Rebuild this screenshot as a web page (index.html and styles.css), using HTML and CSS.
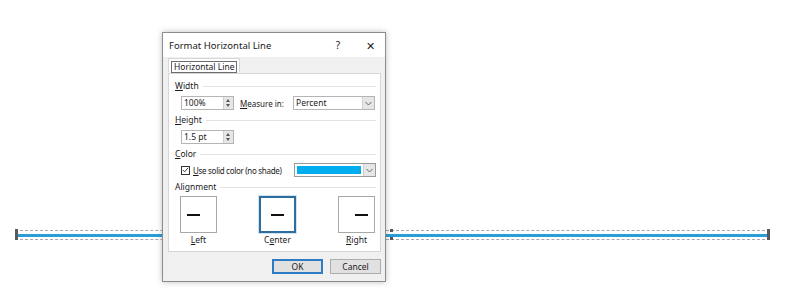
FILE: index.html
```html
<!DOCTYPE html>
<html lang="en">
<head>
<meta charset="UTF-8">
<title>Format Horizontal Line</title>
<link rel="stylesheet" href="styles.css">
</head>
<body>
<div class="canvas">
  <div class="rule">
    <div class="rule-line"></div>
    <span class="handle handle-left"></span>
    <span class="handle handle-mid-top"></span>
    <span class="handle handle-mid-bottom"></span>
    <span class="handle handle-right"></span>
  </div>
</div>

<div class="dialog">
  <div class="titlebar">
    <span class="title">Format Horizontal Line</span>
    <span class="help">?</span>
    <span class="close">&#x2715;</span>
  </div>
  <div class="dialog-body">
    <div class="tabs">
      <div class="tab"><span class="tab-focus">Horizontal Line</span></div>
    </div>
    <div class="panel">
      <div class="group-head"><span><u>W</u>idth</span></div>
      <div class="row">
        <div class="spin"><span class="spin-value">100%</span><span class="spin-btns"><i class="up"></i><i class="down"></i></span></div>
        <span class="field-label"><u>M</u>easure in:</span>
        <div class="select"><span class="select-value">Percent</span><span class="select-arrow"><svg width="7" height="5" viewBox="0 0 7 5"><path d="M0.5 1 L3.5 4 L6.5 1" fill="none" stroke="#666" stroke-width="1"/></svg></span></div>
      </div>

      <div class="group-head"><span><u>H</u>eight</span></div>
      <div class="row">
        <div class="spin"><span class="spin-value">1.5 pt</span><span class="spin-btns"><i class="up"></i><i class="down"></i></span></div>
      </div>

      <div class="group-head"><span><u>C</u>olor</span></div>
      <div class="row row-color">
        <span class="check"><svg width="8" height="8" viewBox="0 0 8 8"><path d="M1 4 L3 6 L7 1.5" fill="none" stroke="#222" stroke-width="1"/></svg></span>
        <span class="check-label"><u>U</u>se solid color (no shade)</span>
        <div class="select select-color"><span class="swatch"></span><span class="select-arrow"><svg width="7" height="5" viewBox="0 0 7 5"><path d="M0.5 1 L3.5 4 L6.5 1" fill="none" stroke="#666" stroke-width="1"/></svg></span></div>
      </div>

      <div class="group-head"><span>Alignment</span></div>
      <div class="align-row">
        <div class="align-opt">
          <div class="align-box box-left"><span class="dash"></span></div>
          <span class="align-label"><u>L</u>eft</span>
        </div>
        <div class="align-opt">
          <div class="align-box box-center selected"><span class="dash"></span></div>
          <span class="align-label">C<u>e</u>nter</span>
        </div>
        <div class="align-opt">
          <div class="align-box box-right"><span class="dash"></span></div>
          <span class="align-label"><u>R</u>ight</span>
        </div>
      </div>
    </div>
    <div class="buttons">
      <button class="btn btn-default">OK</button>
      <button class="btn">Cancel</button>
    </div>
  </div>
</div>
</body>
</html>
```

FILE: styles.css
```css
body {
  margin: 0;
  background: #fff;
  font-family: "Noto Sans", "Open Sans", sans-serif;
  color: #1a1a1a;
}
.canvas {
  height: 308px;
  padding: 230px 0 0 15px;
  box-sizing: border-box;
}
.rule {
  position: relative;
  width: 755px;
  height: 10px;
  box-sizing: border-box;
  border-top: 1px dashed #a8a8a8;
  border-bottom: 1px dashed #a8a8a8;
  padding-top: 3px;
}
.rule-line {
  height: 3px;
  background: #2a9fd6;
}
.handle {
  position: absolute;
  width: 3px;
  background: #5a5a5a;
}
.handle-left { left: 0; top: -2px; height: 11px; }
.handle-mid-top { left: 375px; top: -2px; height: 3px; }
.handle-mid-bottom { left: 375px; top: 6px; height: 3px; }
.handle-right { right: 0; top: -2px; height: 11px; }

.dialog {
  position: absolute;
  left: 162px;
  top: 32px;
  width: 224px;
  height: 250px;
  box-sizing: border-box;
  border: 1px solid #8c8c8c;
  background: #f0f0f0;
  box-shadow: 0 0 6px rgba(0, 0, 0, 0.25);
  display: flex;
  flex-direction: column;
}
.titlebar {
  height: 24px;
  background: #fff;
  display: flex;
  align-items: center;
  padding: 0 0 0 6px;
  font-size: 9.5px;
}
.title { flex: 1; }
.help {
  width: 24px;
  text-align: center;
  font-size: 10px;
}
.close {
  width: 30px;
  text-align: center;
  font-size: 11px;
  margin-left: 5px;
}
.dialog-body {
  flex: 1;
  padding: 3px 4px 0 4px;
  font-size: 8.5px;
}
.tabs {
  display: flex;
  padding-left: 1px;
  height: 13px;
}
.tab {
  background: #fff;
  border: 1px solid #d6d6d6;
  border-bottom: none;
  padding: 2px 2px 0 2px;
  margin-top: -2px;
  height: 14px;
  box-sizing: border-box;
  position: relative;
  z-index: 1;
}
.tab-focus {
  display: block;
  border: 1px solid #6d6d6d;
  padding: 0 2px;
  line-height: 10px;
  font-size: 8.5px;
}
.panel {
  background: #fff;
  border: 1px solid #d6d6d6;
  height: 179px;
  box-sizing: border-box;
  padding: 6px 4px 0 6px;
  margin-left: 1px;
  margin-right: 0;
}
.group-head {
  display: flex;
  align-items: center;
  height: 12px;
  line-height: 12px;
}
.group-head::after {
  content: "";
  flex: 1;
  height: 1px;
  background: #e3e3e3;
  margin-left: 4px;
}
.row {
  display: flex;
  align-items: center;
  height: 14px;
  margin: 4px 0 4px 6px;
}
.spin {
  display: flex;
  width: 53px;
  height: 14px;
  box-sizing: border-box;
  border: 1px solid #b5b5b5;
}
.spin-value {
  flex: 1;
  padding-left: 2px;
  line-height: 12px;
}
.spin-btns {
  width: 9px;
  display: flex;
  flex-direction: column;
  border-left: 1px solid #d0d0d0;
  background: #e6e6e6;
}
.spin-btns i {
  flex: 1;
  position: relative;
}
.spin-btns i::after {
  content: "";
  position: absolute;
  left: 2px;
  border-left: 2.5px solid transparent;
  border-right: 2.5px solid transparent;
}
.spin-btns .up::after { top: 2px; border-bottom: 3px solid #555; }
.spin-btns .down::after { top: 1px; border-top: 3px solid #555; }
.field-label {
  margin-left: 6px;
  width: 53px;
  font-size: 8px;
  white-space: nowrap;
}
.select {
  display: flex;
  width: 82px;
  height: 14px;
  box-sizing: border-box;
  border: 1px solid #b5b5b5;
  background: #fff;
}
.select-value {
  flex: 1;
  padding-left: 2px;
  line-height: 12px;
}
.select-arrow {
  width: 11px;
  border-left: 1px solid #d0d0d0;
  background: #e6e6e6;
  display: flex;
  align-items: center;
  justify-content: center;
}
.row-color {
  margin-top: 3px;
}
.check {
  width: 9px;
  height: 9px;
  box-sizing: border-box;
  border: 1px solid #333;
  display: flex;
  align-items: center;
  justify-content: center;
}
.check-label {
  margin-left: 3px;
  width: 101px;
  white-space: nowrap;
  font-size: 8px;
  letter-spacing: -0.3px;
}
.select-color {
  padding: 2px 0 2px 2px;
  border-color: #9a9a9a;
}
.swatch {
  flex: 1;
  background: #00aeef;
  margin-right: 2px;
}
.select-color .select-arrow {
  margin: -2px 0;
}
.align-row {
  display: flex;
  justify-content: space-between;
  margin: 3px 1px 0 5px;
}
.align-opt {
  display: flex;
  flex-direction: column;
  align-items: center;
  width: 37px;
}
.align-box {
  width: 37px;
  height: 37px;
  box-sizing: border-box;
  border: 1px solid #a8a8a8;
  display: flex;
  align-items: center;
  padding: 0 6px;
}
.box-left { justify-content: flex-start; }
.box-center { justify-content: center; }
.box-right { justify-content: flex-end; }
.align-box.selected {
  border: 2px solid #2e6e9e;
  box-shadow: 0 0 0 1px #cfe3f3;
}
.dash {
  width: 13px;
  height: 2px;
  background: #111;
}
.align-label {
  margin-top: 1px;
  line-height: 12px;
}
.buttons {
  display: flex;
  justify-content: flex-end;
  gap: 7px;
  margin-top: 7px;
  padding-right: 0;
}
.btn {
  width: 51px;
  height: 15px;
  padding: 0;
  font-family: "Noto Sans", "Open Sans", sans-serif;
  font-size: 8.5px;
  color: #1a1a1a;
  background: #e1e1e1;
  border: 1px solid #adadad;
  line-height: 12px;
}
.btn-default {
  border: 2px solid #2d7cc4;
}
```
